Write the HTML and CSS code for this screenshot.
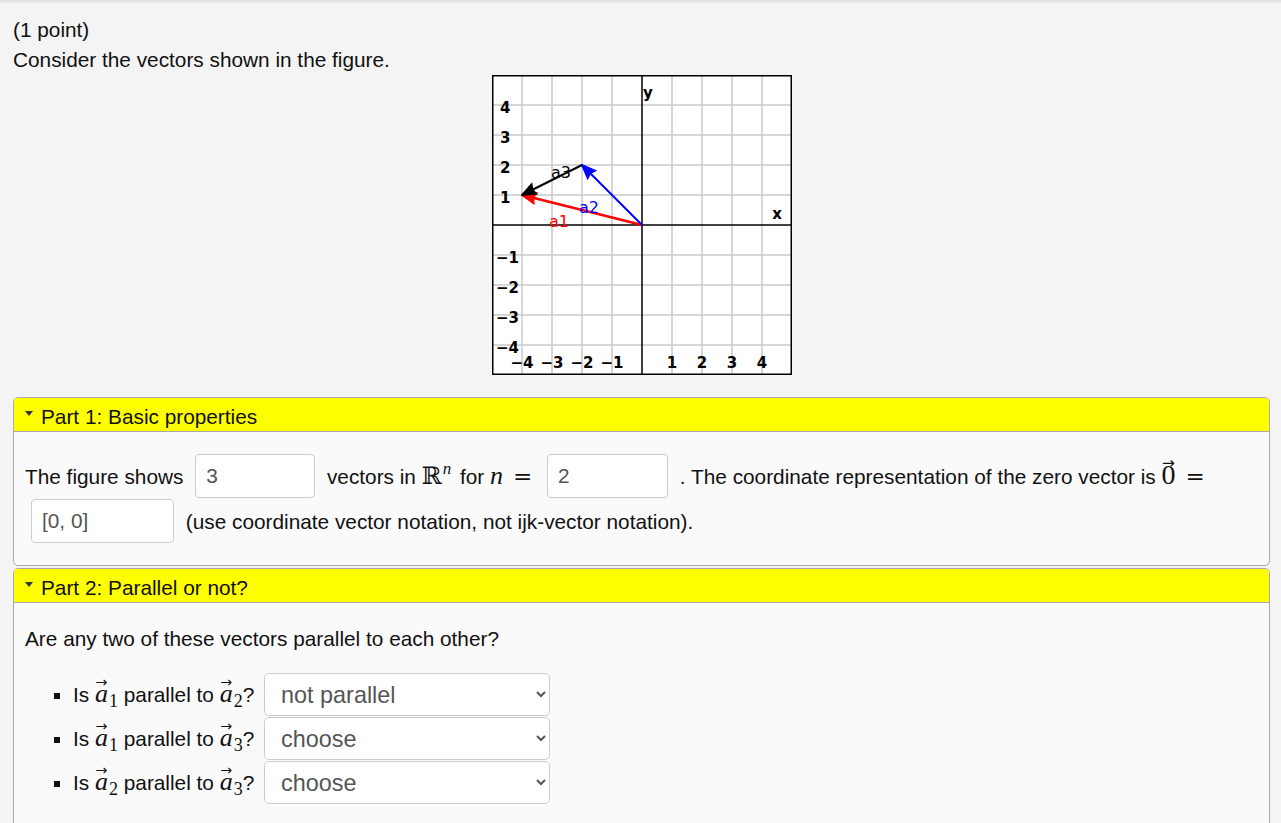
FILE: index.html
```html
<!DOCTYPE html>
<html>
<head>
<meta charset="utf-8">
<link rel="stylesheet" href="styles.css">
</head>
<body>
<div class="topshadow"></div>
<div class="page">
  <div class="intro">(1 point)</div>
  <div class="intro">Consider the vectors shown in the figure.</div>
  <div class="figure">
    <svg class="graph" width="300" height="300" viewBox="0 0 300 300" xmlns="http://www.w3.org/2000/svg">
      <defs>
        <marker id="hr" viewBox="0 0 16 14" refX="15" refY="7" markerWidth="16" markerHeight="14" markerUnits="userSpaceOnUse" orient="auto"><path d="M1,1 L16,7 L1,13 L3,7 z" fill="#ff0000" stroke="#ff0000" stroke-width="1"/></marker>
        <marker id="hb" viewBox="0 0 16 14" refX="15" refY="7" markerWidth="16" markerHeight="14" markerUnits="userSpaceOnUse" orient="auto"><path d="M1,1 L16,7 L1,13 L3,7 z" fill="#0000ff" stroke="#0000ff" stroke-width="1"/></marker>
        <marker id="hk" viewBox="0 0 16 14" refX="15" refY="7" markerWidth="16" markerHeight="14" markerUnits="userSpaceOnUse" orient="auto"><path d="M1,1 L16,7 L1,13 L3,7 z" fill="#000000" stroke="#000000" stroke-width="1"/></marker>
      </defs>
      <rect x="0" y="0" width="300" height="300" fill="#ffffff"/>
      <g stroke="#c8c8c8" stroke-width="1.5">
        <line x1="30" y1="0" x2="30" y2="300"/><line x1="60" y1="0" x2="60" y2="300"/>
        <line x1="90" y1="0" x2="90" y2="300"/><line x1="120" y1="0" x2="120" y2="300"/>
        <line x1="180" y1="0" x2="180" y2="300"/><line x1="210" y1="0" x2="210" y2="300"/>
        <line x1="240" y1="0" x2="240" y2="300"/><line x1="270" y1="0" x2="270" y2="300"/>
        <line y1="30" x1="0" y2="30" x2="300"/><line y1="60" x1="0" y2="60" x2="300"/>
        <line y1="90" x1="0" y2="90" x2="300"/><line y1="120" x1="0" y2="120" x2="300"/>
        <line y1="180" x1="0" y2="180" x2="300"/><line y1="210" x1="0" y2="210" x2="300"/>
        <line y1="240" x1="0" y2="240" x2="300"/><line y1="270" x1="0" y2="270" x2="300"/>
      </g>
      <g stroke="#000" stroke-width="1.5">
        <line x1="150" y1="0" x2="150" y2="300"/>
        <line x1="0" y1="150" x2="300" y2="150"/>
      </g>
      <rect x="0.75" y="0.75" width="298.5" height="298.5" fill="none" stroke="#000" stroke-width="1.5"/>
      <g class="lbl">
        <text x="8" y="38">4</text><text x="8" y="68">3</text><text x="8" y="98">2</text><text x="8" y="128">1</text>
        <text x="4" y="188">−1</text><text x="4" y="218">−2</text><text x="4" y="248">−3</text><text x="4" y="278">−4</text>
      </g>
      <g class="lbl" text-anchor="middle">
        <text x="30" y="293">−4</text><text x="60" y="293">−3</text><text x="90" y="293">−2</text><text x="120" y="293">−1</text>
        <text x="180" y="293">1</text><text x="210" y="293">2</text><text x="240" y="293">3</text><text x="270" y="293">4</text>
        <text x="156" y="23">y</text><text x="285" y="144">x</text>
      </g>
      <line x1="150" y1="150" x2="30" y2="120" stroke="#ff0000" stroke-width="2.5" marker-end="url(#hr)"/>
      <line x1="150" y1="150" x2="90" y2="90" stroke="#0000ff" stroke-width="2" marker-end="url(#hb)"/>
      <line x1="90" y1="90" x2="30" y2="120" stroke="#000000" stroke-width="2" marker-end="url(#hk)"/>
      <g class="vl">
        <text x="57" y="152" fill="#ff0000">a1</text>
        <text x="87" y="138" fill="#0000ff">a2</text>
        <text x="59" y="103" fill="#000000">a3</text>
      </g>
    </svg>
  </div>

  <div class="panel">
    <div class="phead"><span class="tri"></span>Part 1: Basic properties</div>
    <div class="pbody">
      <p class="row">The figure shows <input class="ans w120" type="text" value="3"> vectors in <span class="bb">ℝ</span><sup class="mi">n</sup> for <span class="mi">n</span><span class="mo">=</span> <input class="ans w121" type="text" value="2"> . The coordinate representation of the zero vector is <span class="nw"><span class="vec zero">0</span><span class="mo">=</span></span> <input class="ans w143" type="text" value="[0, 0]"> (use coordinate vector notation, not ijk-vector notation).</p>
    </div>
  </div>

  <div class="panel">
    <div class="phead"><span class="tri"></span>Part 2: Parallel or not?</div>
    <div class="pbody pbody2">
      <p class="q">Are any two of these vectors parallel to each other?</p>
      <ul class="qlist">
        <li>Is <span class="vec mi">a</span><sub>1</sub> parallel to <span class="vec mi">a</span><sub>2</sub>? <select class="sel"><option>not parallel</option><option>choose</option></select></li>
        <li>Is <span class="vec mi">a</span><sub>1</sub> parallel to <span class="vec mi">a</span><sub>3</sub>? <select class="sel"><option>choose</option></select></li>
        <li>Is <span class="vec mi">a</span><sub>2</sub> parallel to <span class="vec mi">a</span><sub>3</sub>? <select class="sel"><option>choose</option></select></li>
      </ul>
    </div>
  </div>
</div>
</body>
</html>
```
FILE: styles.css
```css
html, body {
  margin: 0;
  padding: 0;
  background: #f4f4f4;
}
body {
  font-family: "Liberation Sans", Arial, sans-serif;
  font-size: 20.8px;
  color: #111111;
  min-height: 823px;
  overflow: hidden;
}
.topshadow {
  height: 4px;
  background: linear-gradient(to bottom, rgba(0,0,0,0.10), rgba(0,0,0,0));
  margin-bottom: -4px;
}
.page {
  padding: 15px 11px 0 13px;
}
.intro {
  line-height: 30px;
}
.figure {
  display: flex;
  justify-content: center;
  padding-left: 1px;
}
.graph {
  display: block;
}
.lbl text {
  font-family: "DejaVu Sans", sans-serif;
  font-weight: bold;
  font-size: 15px;
  fill: #000;
}
.vl text {
  font-family: "DejaVu Sans", sans-serif;
  font-size: 16px;
}
.panel {
  margin-top: 22px;
  border: 1px solid #aaaaaa;
  border-radius: 5px;
  overflow: hidden;
  background: #fafafa;
}
.panel + .panel {
  margin-top: 2px;
}
.phead {
  background: #ffff00;
  border-bottom: 1px solid #aaaaaa;
  height: 29px;
  line-height: 29px;
  padding: 4px 0 0 11px;
  display: flex;
  align-items: center;
  color: #111111;
}
.tri {
  display: inline-block;
  width: 0;
  height: 0;
  border-left: 4.5px solid transparent;
  border-right: 4.5px solid transparent;
  border-top: 5px solid #333;
  margin-right: 8px;
  margin-top: -6px;
}
.pbody {
  padding: 22px 11px 21px 11px;
}
.row {
  margin: 0;
  line-height: 45px;
}
.ans {
  box-sizing: border-box;
  height: 44px;
  vertical-align: top;
  margin: 0 6px;
  padding: 0 10px;
  border: 1px solid #cccccc;
  border-radius: 4px;
  background: #ffffff;
  font-family: "Liberation Sans", Arial, sans-serif;
  font-size: 20.8px;
  color: #555555;
}
.w120 { width: 120px; }
.w121 { width: 121px; }
.w143 { width: 143px; }
.mi {
  font-family: "Liberation Serif", "Times New Roman", serif;
  font-style: italic;
  font-size: 26px;
  line-height: 1;
}
sup.mi {
  font-size: 17px;
  line-height: 0;
  vertical-align: 10px;
  margin-left: 1px;
  margin-right: 3px;
}
.bb {
  font-family: "DejaVu Serif", serif;
  font-size: 24px;
  line-height: 1;
}
.mo {
  font-family: "DejaVu Serif", serif;
  font-size: 23px;
  line-height: 1;
  margin-left: 10px;
  margin-right: 3px;
}
.nw {
  white-space: nowrap;
}
.vec {
  position: relative;
  display: inline-block;
  line-height: 1;
}
.vec::before {
  content: "→";
  position: absolute;
  left: 0;
  right: 0;
  top: -0.4em;
  text-align: center;
  font-family: "DejaVu Sans", sans-serif;
  font-style: normal;
  font-size: 0.55em;
  line-height: 1;
}
.zero {
  font-family: "Liberation Serif", "Times New Roman", serif;
  font-size: 28px;
}
.zero::before {
  top: -0.35em;
}
sub {
  font-family: "Liberation Serif", "Times New Roman", serif;
  font-size: 18px;
  line-height: 0;
  vertical-align: -5px;
  margin-left: 1px;
}
.pbody2 {
  padding-top: 21px;
  padding-bottom: 40px;
}
.q {
  margin: 0 0 19px 0;
  line-height: 30px;
}
.qlist {
  margin: 0;
  padding-left: 48px;
  list-style: square;
}
.qlist li {
  line-height: 44px;
  height: 44px;
}
.sel {
  box-sizing: border-box;
  width: 286px;
  height: 43px;
  vertical-align: top;
  margin: 0 0 0 4px;
  padding: 0 10px 0 12px;
  border: 1px solid #cccccc;
  border-radius: 5px;
  background-color: #ffffff;
  font-family: "Liberation Sans", Arial, sans-serif;
  font-size: 23.4px;
  color: #555555;
}
```
